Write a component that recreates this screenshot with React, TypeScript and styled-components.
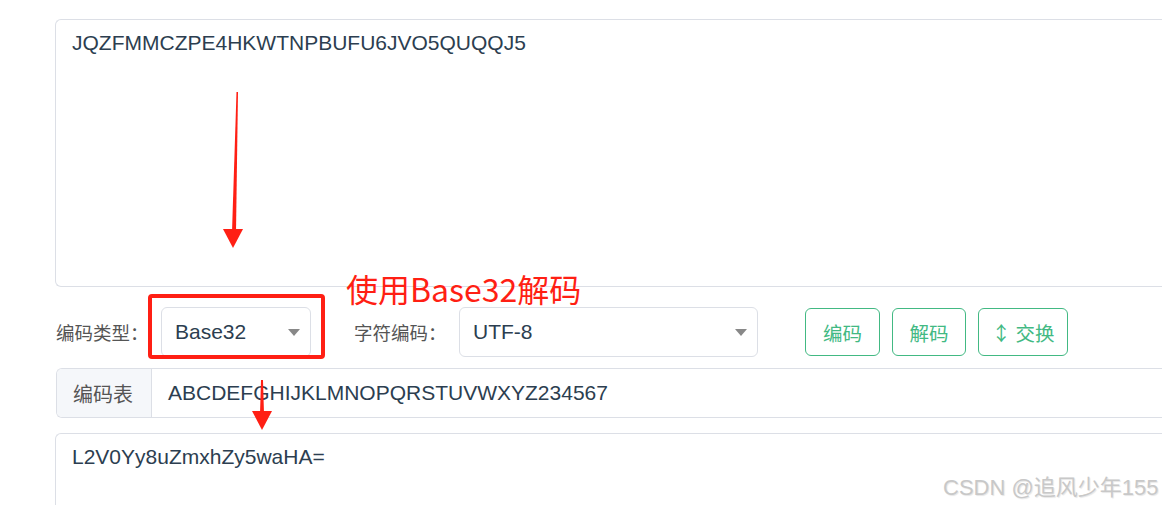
import React from "react";
import styled, { createGlobalStyle } from "styled-components";

const GlobalStyle = createGlobalStyle`
	html, body {
		margin: 0;
		padding: 0;
		background: #fff;
		overflow: hidden;
	}
	body {
		font-family: "Liberation Sans", Arial, "Noto Sans CJK SC", sans-serif;
	}
`;

const Page = styled.div`
	position: relative;
	width: 1162px;
	height: 505px;
	padding: 19px 0 0 55px;
	box-sizing: border-box;
	overflow: hidden;
`;

// the boxes run on past the right edge of the shot, so no right border shows
const TextBox = styled.textarea<{ $height: number; $open?: boolean }>`
	display: block;
	width: 100%;
	height: ${(p) => p.$height}px;
	box-sizing: border-box;
	padding: 7px 16px;
	border: 1px solid #dcdfe6;
	border-right: none;
	border-bottom: ${(p) => (p.$open ? "none" : "1px solid #dcdfe6")};
	border-radius: ${(p) => (p.$open ? "6px 0 0 0" : "6px 0 0 6px")};
	font-family: "Liberation Sans", Arial, sans-serif;
	font-size: 21px;
	line-height: 1.5;
	color: #2c3e50;
	resize: none;
	outline: none;
	overflow: hidden;
	background: #fff;
`;

const ControlRow = styled.div`
	display: flex;
	align-items: center;
	height: 50px;
	margin: 20px 0 11px 1px;
`;

const Label = styled.span<{ $width: number }>`
	display: inline-block;
	width: ${(p) => p.$width}px;
	font-family: "Noto Sans CJK SC", sans-serif;
	font-size: 18.5px;
	color: #555;
	white-space: nowrap;
`;

const Select = styled.div<{ $width: number; $after: number }>`
	position: relative;
	display: flex;
	align-items: center;
	width: ${(p) => p.$width}px;
	height: 50px;
	box-sizing: border-box;
	padding-left: 13px;
	margin-right: ${(p) => p.$after}px;
	border: 1px solid #dcdfe6;
	border-radius: 6px;
	font-size: 21px;
	color: #2c3e50;
	&::after {
		content: "";
		position: absolute;
		right: 10px;
		top: 21px;
		border-left: 6px solid transparent;
		border-right: 6px solid transparent;
		border-top: 7px solid #888;
	}
`;

const Buttons = styled.div`
	display: flex;
	gap: 12px;
`;

const Button = styled.button<{ $width: number }>`
	width: ${(p) => p.$width}px;
	height: 48px;
	padding: 0;
	background: #fff;
	border: 1px solid #42b983;
	border-radius: 6px;
	color: #42b983;
	font-family: "Noto Sans CJK SC", sans-serif;
	font-size: 19.5px;
	cursor: pointer;
`;

const InputGroup = styled.div`
	display: flex;
	height: 50px;
	box-sizing: border-box;
	margin-left: 1px;
	border: 1px solid #dcdfe6;
	border-right: none;
	border-radius: 6px 0 0 6px;
	overflow: hidden;
	margin-bottom: 15px;
`;

const Addon = styled.div`
	display: flex;
	align-items: center;
	width: 95px;
	box-sizing: border-box;
	padding-left: 16px;
	background: #f5f7fa;
	border-right: 1px solid #dcdfe6;
	font-family: "Noto Sans CJK SC", sans-serif;
	font-size: 20px;
	color: #555;
`;

const InputText = styled.div`
	display: flex;
	align-items: center;
	padding-left: 16px;
	font-size: 21px;
	color: #2c3e50;
`;

const NoteBox = styled.div`
	position: absolute;
	left: 148px;
	top: 294px;
	width: 177px;
	height: 65px;
	box-sizing: border-box;
	border: 4px solid #ff1f14;
	border-radius: 4px;
`;

const NoteText = styled.div`
	position: absolute;
	left: 346px;
	top: 271px;
	font-family: "Noto Sans CJK SC", sans-serif;
	font-size: 32px;
	line-height: 1.1;
	color: #ff1f14;
	white-space: nowrap;
`;

const ArrowLayer = styled.svg`
	position: absolute;
	left: 0;
	top: 0;
	pointer-events: none;
`;

const Watermark = styled.div`
	position: absolute;
	left: 943px;
	top: 469px;
	font-family: "Liberation Sans", Arial, "Noto Sans CJK SC", sans-serif;
	font-size: 22px;
	color: #c8c8c8;
	text-shadow: 1px 1px 1px rgba(0, 0, 0, 0.1);
	white-space: nowrap;
`;

const App: React.FC = () => {
	return (
		<>
			<GlobalStyle />
			<Page>
				<TextBox $height={268} readOnly value="JQZFMMCZPE4HKWTNPBUFU6JVO5QUQQJ5" />
				<ControlRow>
					<Label $width={105}>编码类型：</Label>
					<Select $width={150} $after={43}>Base32</Select>
					<Label $width={105}>字符编码：</Label>
					<Select $width={299} $after={47}>UTF-8</Select>
					<Buttons>
						<Button $width={75}>编码</Button>
						<Button $width={74}>解码</Button>
						<Button $width={90}>↕ 交换</Button>
					</Buttons>
				</ControlRow>
				<InputGroup>
					<Addon>编码表</Addon>
					<InputText>ABCDEFGHIJKLMNOPQRSTUVWXYZ234567</InputText>
				</InputGroup>
				<TextBox $height={72} $open readOnly value="L2V0Yy8uZmxhZy5waHA=" />

				<NoteBox />
				<NoteText>使用Base32解码</NoteText>
				<ArrowLayer width="1162" height="505" viewBox="0 0 1162 505">
					<polygon points="236.5,92 238,92 236,232 232,232" fill="#ff1f14" />
					<polygon points="223,229 243,229 233,248" fill="#ff1f14" />
					<polygon points="261,380 263,380 264,414 260,414" fill="#ff1f14" />
					<polygon points="252,411 272,411 262,430" fill="#ff1f14" />
				</ArrowLayer>
				<Watermark>CSDN @追风少年155</Watermark>
			</Page>
		</>
	);
};

export default App;
